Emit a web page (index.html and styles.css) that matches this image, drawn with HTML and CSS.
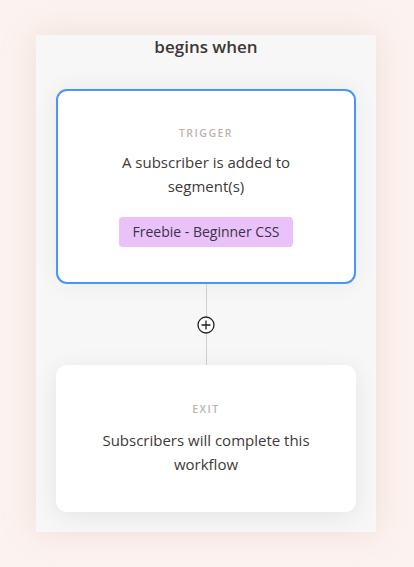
FILE: index.html
```html
<!DOCTYPE html>
<html>
<head>
<meta charset="utf-8">
<link rel="stylesheet" href="styles.css">
</head>
<body>
<div class="page">
  <section class="panel">
    <h2 class="title">begins when</h2>
    <div class="card card-trigger">
      <div class="label">TRIGGER</div>
      <p class="desc">A subscriber is added to segment(s)</p>
      <span class="pill">Freebie - Beginner CSS</span>
    </div>
    <div class="connector">
      <span class="line"></span>
      <span class="plus">
        <svg width="18" height="18" viewBox="0 0 18 18"><circle cx="9" cy="9" r="8" fill="#fff" stroke="#222" stroke-width="1.3"/><path d="M9 4.5v9M4.5 9h9" stroke="#222" stroke-width="1.3"/></svg>
      </span>
      <span class="line"></span>
    </div>
    <div class="card card-exit">
      <div class="label">EXIT</div>
      <p class="desc">Subscribers will complete this workflow</p>
    </div>
  </section>
</div>
</body>
</html>
```
FILE: styles.css
```css
html, body {
  margin: 0;
  padding: 0;
  background: #fcf2ef;
  font-family: "Open Sans", "Lato", sans-serif;
  color: #3e3a3a;
}
.page {
  width: 414px;
  height: 567px;
  padding: 35px 36px 0 36px;
  box-sizing: border-box;
}
.panel {
  width: 340px;
  background: #f7f7f7;
  height: 497px;
  box-shadow: 0 0 30px rgba(200, 170, 160, 0.25);
  display: flex;
  flex-direction: column;
  align-items: center;
}
.title {
  margin: 1px 0 0;
  font-size: 17px;
  font-weight: 600;
  line-height: 22px;
  color: #3d3838;
}
.card {
  width: 300px;
  box-sizing: border-box;
  background: #fff;
  border-radius: 11px;
  display: flex;
  flex-direction: column;
  align-items: center;
  text-align: center;
}
.card-trigger {
  margin-top: 31px;
  height: 195px;
  border: 2px solid #4a96f5;
  padding-top: 35px;
  box-shadow: 0 0 24px rgba(0,0,0,0.06);
}
.card-exit {
  height: 147px;
  padding-top: 37px;
  box-shadow: 0 4px 24px rgba(0,0,0,0.08);
}
.label {
  font-size: 10.5px;
  font-weight: 600;
  letter-spacing: 1.5px;
  color: #bdb3ad;
  line-height: 14px;
}
.desc {
  margin: 10px 0 0;
  font-size: 15px;
  line-height: 24px;
  width: 210px;
  color: #3e3a3a;
}
.card-exit .desc { width: 250px; margin-top: 12px; }
.pill {
  margin-top: 19px;
  background: #e9c2fa;
  border-radius: 4px;
  height: 30px;
  line-height: 30px;
  padding: 0 13px;
  font-size: 14px;
  color: #3a3348;
}
.connector {
  display: flex;
  flex-direction: column;
  align-items: center;
  height: 81px;
}
.line {
  flex: 1;
  width: 1px;
  background: #cfcfcf;
}
.plus {
  display: flex;
  height: 18px;
}
```
